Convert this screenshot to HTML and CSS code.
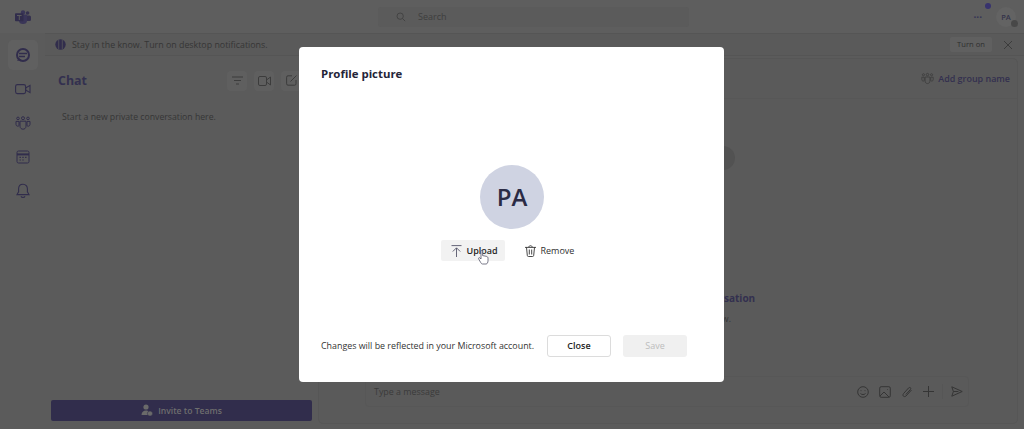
FILE: index.html
```html
<!DOCTYPE html>
<html lang="en">
<head>
<meta charset="utf-8">
<title>Profile picture</title>
<link rel="stylesheet" href="styles.css">
</head>
<body>
<div class="app">
  <header class="topbar">
    <div class="brand">
      <svg width="16" height="14" viewBox="0 0 16 14"><circle cx="12.6" cy="3" r="1.8" fill="#35314f"/><rect x="10" y="5.4" width="6" height="5.6" rx="1.5" fill="#35314f"/><circle cx="8" cy="2.4" r="2.2" fill="#3a3658"/><path d="M4 4.5h8v6a4 3.5 0 0 1-8 0z" fill="#3a3658"/><rect x="0" y="3.2" width="8.5" height="8" rx=".8" fill="#312d4c"/><path d="M2 5h4.6v1H4.8v4H3.8V6H2z" fill="#5c5c5c"/></svg>
    </div>
    <div class="search">
      <svg class="search-icon" width="10" height="10" viewBox="0 0 12 12"><circle cx="5" cy="5" r="3.8" fill="none" stroke="#3f3f3f"/><path d="M7.8 7.8 11 11" stroke="#3f3f3f"/></svg>
      <span>Search</span>
    </div>
    <div class="account">
      <span class="more">···</span>
      <span class="me">PA<i class="status"></i></span>
      <i class="dot"></i>
    </div>
  </header>
  <div class="main">
    <nav class="rail">
      <div class="rail-item active">
        <svg width="16" height="16" viewBox="0 0 16 16"><circle cx="8" cy="8" r="6" fill="none" stroke="#312d4c" stroke-width="2"/><path d="M4 6.5h8M4 9.5h6" stroke="#312d4c" stroke-width="1.4"/><path d="M2 14l2-3 2 2z" fill="#312d4c"/></svg>
      </div>
      <div class="rail-item">
        <svg width="16" height="14" viewBox="0 0 16 14"><rect x=".6" y="2.6" width="10" height="9" rx="1.8" fill="none" stroke="#312d4c" stroke-width="1.1"/><path d="M10.6 6 15 3.4v7.2L10.6 8z" fill="none" stroke="#312d4c" stroke-width="1.1"/></svg>
      </div>
      <div class="rail-item">
        <svg width="16" height="14" viewBox="0 0 16 14" fill="none" stroke="#312d4c"><circle cx="3" cy="2.4" r="1.3"/><circle cx="8" cy="2.2" r="1.5"/><circle cx="13" cy="2.4" r="1.3"/><path d="M1 5.4h3v4c0 1.2-3 1.2-3-1zM12 5.4h3v3c0 2.2-3 2.2-3 1zM5 5.2h6v5c0 4-6 4-6 0z"/></svg>
      </div>
      <div class="rail-item">
        <svg width="14" height="14" viewBox="0 0 14 14" fill="none" stroke="#312d4c"><rect x="1" y="1" width="12" height="12" rx="1.5"/><path d="M1 4.4h12" stroke-width="2"/><path d="M3.500 7.400h1.400M6.300 7.400h1.400M9.100 7.400h1.400M3.500 10h1.400M6.300 10h1.400" stroke-width="1.2"/></svg>
      </div>
      <div class="rail-item">
        <svg width="14" height="16" viewBox="0 0 14 16" fill="none" stroke="#312d4c" stroke-width="1.1"><path d="M7 1.200c-2.800 0-4.400 2-4.400 4.600v3L1 11.600h12l-1.600-2.800v-3C11.400 3.200 9.800 1.200 7 1.200z"/><path d="M5 13.200c.6 1.600 3.400 1.600 4 0"/></svg>
      </div>
    </nav>
    <div class="content">
      <div class="notice">
        <svg class="globe" width="11" height="11" viewBox="0 0 11 11"><circle cx="5.500" cy="5.500" r="5.200" fill="#312d4c"/><path d="M3.700 .8v9.400M7.300 .8v9.400" stroke="#5c5c5c" stroke-width=".7"/></svg>
        <span class="notice-text">Stay in the know. Turn on desktop notifications.</span>
        <span class="turn-on">Turn on</span>
        <svg class="dismiss" width="10" height="10" viewBox="0 0 10 10"><path d="M1 1l8 8M9 1 1 9" stroke="#3c3c3c"/></svg>
      </div>
      <div class="panes">
        <aside class="chat">
          <div class="chat-head">
            <h2>Chat</h2>
            <div class="chat-tools">
              <span class="tool"><svg width="11" height="9" viewBox="0 0 11 9"><path d="M0 1h11M2 4.500h7M4 8h3" stroke="#3c3c3c"/></svg></span>
              <span class="tool"><svg width="13" height="10" viewBox="0 0 13 10" fill="none" stroke="#3c3c3c"><rect x=".5" y=".5" width="8" height="9" rx="1.400"/><path d="M8.500 4 12.500 1v8l-4-3z"/></svg></span>
              <span class="tool"><svg width="11" height="11" viewBox="0 0 11 11" fill="none" stroke="#3c3c3c"><path d="M6 .8H2A1.400 1.400 0 0 0 .6 2.200v6.600A1.400 1.400 0 0 0 2 10.200h6.600A1.400 1.400 0 0 0 10 8.800V5M4.500 6.500 10.500.5"/></svg></span>
            </div>
          </div>
          <p class="chat-hint">Start a new private conversation here.</p>
          <button class="invite" type="button">
            <svg width="12" height="13" viewBox="0 0 12 13"><circle cx="5" cy="3" r="2.600" fill="#6a6a6a"/><path d="M.5 11c0-3 2-4.500 4.500-4.500S9 8 8 11z" fill="#6a6a6a"/><circle cx="9" cy="9.500" r="2.600" fill="#6a6a6a" stroke="#312d4c" stroke-width=".6"/></svg>
            <span>Invite to Teams</span>
          </button>
        </aside>
        <section class="thread">
          <div class="thread-head">
            <svg width="13" height="13" viewBox="0 0 16 14" fill="none" stroke="#3c3c3c"><circle cx="3" cy="2.400" r="1.300"/><circle cx="8" cy="2.200" r="1.500"/><circle cx="13" cy="2.400" r="1.300"/><path d="M1 5.400h3v4c0 1.200-3 1.200-3-1zM12 5.400h3v3c0 2.200-3 2.200-3 1zM5 5.200h6v5c0 4-6 4-6 0z"/></svg>
            <span>Add group name</span>
          </div>
          <div class="thread-body">
            <div class="thread-art"><i class="art-dot"></i></div>
            <h3>You're starting a new conversation</h3>
            <p>Type your first message below.</p>
          </div>
          <div class="composer">
            <span class="composer-text">Type a message</span>
            <div class="composer-tools">
              <svg width="12" height="12" viewBox="0 0 12 12" fill="none" stroke="#353535"><circle cx="6" cy="6" r="5.300"/><path d="M3.500 7.500c1.200 1.400 3.800 1.400 5 0M4 4.300v.8M8 4.300v.8"/></svg>
              <svg width="12" height="12" viewBox="0 0 12 12" fill="none" stroke="#353535"><rect x=".7" y=".7" width="10.600" height="10.600" rx="1.500"/><path d="M1 10 5 6l5 5M8.500 3.300v.6"/></svg>
              <svg width="12" height="12" viewBox="0 0 12 12" fill="none" stroke="#353535"><path d="M10.500 4 5 10c-2 1.700-4-.4-2.500-2.400L7.500 2c1.300-1.300 3-.1 2 1.400L4.800 8.500"/></svg>
              <svg width="11" height="11" viewBox="0 0 11 11" stroke="#353535"><path d="M5.500 0v11M0 5.500h11"/></svg>
              <i class="composer-sep"></i>
              <svg width="12" height="11" viewBox="0 0 12 11" fill="none" stroke="#353535"><path d="M.8.800 11.200 5.500.8 10.200 2.400 5.500zM2.400 5.500h5"/></svg>
            </div>
          </div>
        </section>
      </div>
    </div>
  </div>
</div>

<div class="dialog" role="dialog">
  <h1>Profile picture</h1>
  <div class="dialog-body">
    <div class="avatar">PA</div>
    <div class="avatar-actions">
      <button class="action hover" type="button">
        <svg width="11" height="12" viewBox="0 0 11 12" fill="none" stroke="#55556a" stroke-width=".9"><path d="M.5.600h10M5.500 12V3M1.800 6.500l3.700-3.700 3.700 3.700"/></svg>
        <span>Upload</span>
      </button>
      <button class="action" type="button">
        <svg width="11" height="12" viewBox="0 0 11 12" fill="none" stroke="#333" stroke-width=".9"><path d="M0 2.400h11M3.800 2.200C3.800.2 7.200.2 7.200 2.200M1.500 2.400l.8 8c.1.800.5 1.100 1.200 1.100h4c.7 0 1.100-.3 1.200-1.100l.8-8M4.300 4.500v5M6.700 4.500v5"/></svg>
        <span>Remove</span>
      </button>
    </div>
  </div>
  <div class="dialog-foot">
    <span class="foot-note">Changes will be reflected in your Microsoft account.</span>
    <button class="btn btn-close" type="button">Close</button>
    <button class="btn btn-save" type="button" disabled>Save</button>
  </div>
</div>
<svg class="cursor" width="11" height="15" viewBox="0 0 11 15"><path d="M3 1.200c0-1 1.600-1 1.600 0v4.400l3.600.7c1.200.3 1.800.8 1.800 2v2.500c0 1.500-.8 3.200-1.800 3.200H4.500c-1 0-1.500-1-2-1.800L.7 9c-.6-1 .6-1.800 1.300-1L3 9z" fill="#fff" stroke="#55556a" stroke-width=".8"/></svg>
</body>
</html>
```
FILE: styles.css
```css
* { box-sizing: border-box; }
html, body { margin: 0; height: 100%; }
body {
  position: relative;
  width: 1024px;
  height: 429px;
  overflow: hidden;
  background: #5b5b5b;
  font-family: "Open Sans", "Noto Sans", "Liberation Sans", sans-serif;
  color: #353535;
}
.app { display: flex; flex-direction: column; height: 429px; }
.topbar {
  display: flex;
  align-items: center;
  height: 33px;
  flex: none;
  background: #5e5e5e;
}
.brand { width: 45px; display: flex; justify-content: center; }
.search {
  display: flex;
  align-items: center;
  gap: 12px;
  width: 311px;
  height: 20px;
  margin-left: 333px;
  padding-left: 18px;
  background: #5b5b5b;
  border-radius: 3px;
  font-size: 9px;
  color: #3e3e3e;
}
.account { position: relative; display: flex; align-items: center; margin-left: auto; padding-right: 8px; }
.more { font-size: 10px; color: #353555; margin-right: 14px; font-weight: 700; }
.me {
  position: relative;
  display: flex;
  align-items: center;
  justify-content: center;
  width: 20px;
  height: 20px;
  border-radius: 50%;
  background: #636363;
  font-size: 7.5px;
  font-weight: 600;
  color: #33334a;
}
.status {
  position: absolute;
  right: -2px;
  bottom: 0;
  width: 7px;
  height: 7px;
  border-radius: 50%;
  background: #484848;
}
.dot {
  position: absolute;
  top: -3.5px;
  right: 33px;
  width: 6px;
  height: 6px;
  border-radius: 50%;
  background: #38336e;
}
.main { display: flex; flex: 1; min-height: 0; }
.rail {
  width: 45px;
  flex: none;
  display: flex;
  flex-direction: column;
  align-items: center;
  gap: 4px;
  padding-top: 7px;
}
.rail-item {
  width: 30px;
  height: 30px;
  display: flex;
  align-items: center;
  justify-content: center;
  border-radius: 5px;
}
.rail-item.active { background: #606060; }
.content { flex: 1; display: flex; flex-direction: column; min-width: 0; }
.notice {
  display: flex;
  align-items: center;
  height: 23px;
  flex: none;
  padding-left: 10px;
  background: #5a5a5a;
  border-top: 1px solid #555;
  border-bottom: 1px solid #555;
}
.notice-text { margin-left: 6px; font-size: 8.85px; color: #363636; }
.turn-on {
  margin-left: auto;
  width: 42px;
  height: 15px;
  line-height: 15px;
  text-align: center;
  font-size: 7.6px;
  color: #2f2f2f;
  background: #606060;
  border-radius: 2px;
}
.dismiss { margin: 0 11px 0 11px; }
.panes { flex: 1; display: flex; min-height: 0; }
.chat {
  width: 273px;
  flex: none;
  display: flex;
  flex-direction: column;
  padding: 0 6px 8px 6px;
}
.chat-head { display: flex; align-items: center; justify-content: space-between; height: 49px; padding-left: 7px; }
.chat-head h2 { margin: 0; font-size: 12.4px; font-weight: 700; color: #33304f; }
.chat-tools { display: flex; gap: 7px; margin-right: 11px; }
.tool {
  width: 20px;
  height: 20px;
  display: flex;
  align-items: center;
  justify-content: center;
  background: #5f5f5f;
  border-radius: 4px;
}
.chat-hint { margin: 6px 0 0 11px; font-size: 8.7px; color: #363636; }
.invite {
  margin-top: auto;
  height: 21px;
  display: flex;
  align-items: center;
  justify-content: center;
  gap: 5px;
  border: 0;
  border-radius: 2px;
  background: #312d4c;
  color: #6e6e6e;
  font: 600 8.6px "Open Sans", "Noto Sans", sans-serif;
}
.thread {
  flex: 1;
  display: flex;
  flex-direction: column;
  min-width: 0;
  margin: 2px 6px 5px 0;
  background: #5a5a5a;
  border: 1px solid #565656;
  border-radius: 5px;
}
.thread-head {
  display: flex;
  align-items: center;
  justify-content: flex-end;
  gap: 4px;
  height: 40px;
  flex: none;
  padding-right: 7px;
  border-bottom: 1px solid #575757;
  font-size: 8.95px;
  font-weight: 600;
  color: #33304f;
}
.thread-body { flex: 1; display: flex; flex-direction: column; align-items: center; min-height: 0; }
.thread-art { display: flex; justify-content: flex-end; width: 134px; height: 24px; margin-top: 47px; }
.art-dot { width: 24px; height: 24px; border-radius: 50%; background: #525252; }
.thread-body h3 { margin: 121px 0 0; font-size: 10px; font-weight: 700; color: #33304f; white-space: nowrap; }
.thread-body p { margin: 8px 0 0; font-size: 8.75px; color: #363636; }
.composer {
  display: flex;
  align-items: center;
  justify-content: space-between;
  height: 31px;
  flex: none;
  margin: 0 48px 16px 46px;
  padding: 0 5px 0 8px;
  border: 1px solid #575757;
  border-radius: 4px;
}
.composer-text { font-size: 8.9px; color: #3b3b3b; }
.composer-tools { display: flex; align-items: center; gap: 10px; }
.composer-sep { width: 1px; height: 15px; background: #565656; margin: 0 -2px 0 -2px; }

.dialog {
  position: absolute;
  left: 299px;
  top: 47px;
  width: 425px;
  height: 335px;
  display: flex;
  flex-direction: column;
  padding: 19px 37px 26px 22px;
  background: #fff;
  border-radius: 4px;
  color: #24243a;
}
.dialog h1 { margin: 0; font-size: 11.4px; line-height: 15px; font-weight: 700; color: #242438; }
.dialog-body { flex: 1; display: flex; flex-direction: column; align-items: center; padding: 84px 0 0 16px; }
.avatar {
  width: 64px;
  height: 64px;
  display: flex;
  align-items: center;
  justify-content: center;
  padding-bottom: 2px;
  border-radius: 50%;
  background: #cfd3e2;
  color: #2b2b45;
  font-size: 24px;
  font-weight: 600;
}
.avatar-actions { display: flex; align-items: center; gap: 10px; margin: 11px 5px 0 0; }
.action {
  display: flex;
  align-items: center;
  gap: 5px;
  height: 21px;
  width: 64px;
  padding: 0 0 0 10px;
  border: 0;
  border-radius: 2px;
  background: none;
  color: #303030;
  font: 9px "Open Sans", "Noto Sans", sans-serif;
  white-space: nowrap;
}
.action.hover { background: #f2f2f2; color: #242424; font-weight: 600; }
.action svg { flex: none; }
.dialog-foot { display: flex; align-items: center; height: 21px; }
.foot-note { font-size: 8.9px; color: #333; white-space: nowrap; }
.btn {
  width: 64px;
  height: 22px;
  border-radius: 3px;
  font: 600 9px "Open Sans", "Noto Sans", sans-serif;
}
.btn-close { margin-left: auto; background: #fff; border: 1px solid #dcdcdc; color: #242424; }
.btn-save { margin-left: 12px; background: #f0f0f0; border: 0; color: #bdbdbd; font-weight: 400; }
.cursor { position: absolute; left: 478px; top: 250px; }
```
